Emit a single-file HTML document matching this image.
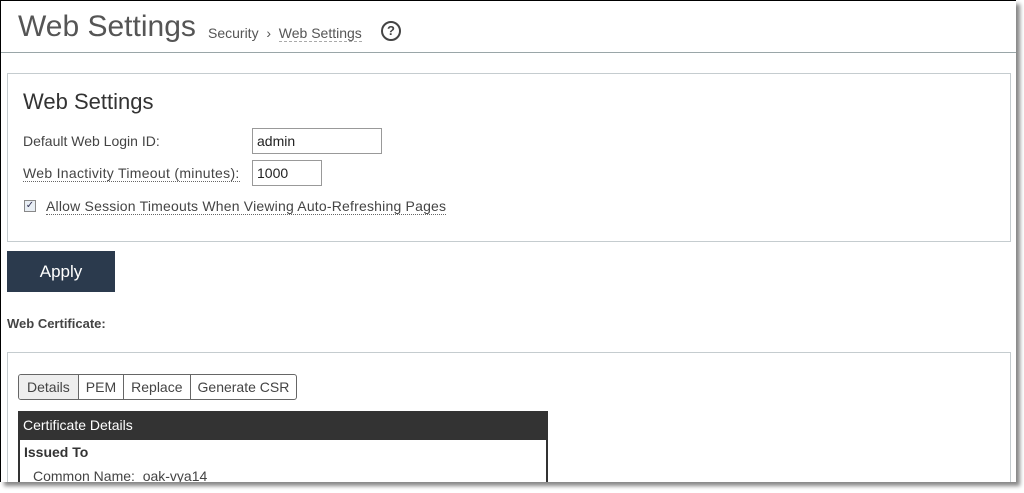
<!DOCTYPE html>
<html><head><style>
*{margin:0;padding:0;box-sizing:border-box}
body{width:1024px;height:493px;background:#fff;font-family:"Liberation Sans",sans-serif;color:#444;position:relative;overflow:hidden}
.page{position:absolute;left:0;top:0;width:1016px;height:482px;background:#fff;border-top:1px solid #000;border-left:1px solid #000;box-shadow:4px 4px 4px #888;overflow:hidden}
.a{position:absolute}
.box{position:absolute;border:1px solid #c5cccf;background:#fff}
.dot{border-bottom:1px dotted #666}
</style></head><body>
<div class="page">
<div class="a" style="left:17px;top:9px;font-size:30px;color:#555">Web Settings</div>
<div class="a" style="left:207px;top:24px;font-size:14px;color:#555">Security &nbsp;›&nbsp; <span style="border-bottom:1px dashed #aaa">Web Settings</span></div>
<div class="a" style="left:380px;top:20px;width:20px;height:20px;border:2px solid #444;border-radius:50%;font-size:13px;font-weight:bold;text-align:center;line-height:16px;color:#444">?</div>
<div class="a" style="left:0;top:51px;width:1016px;height:1px;background:#9aa6a8"></div>
<div class="box" style="left:6px;top:72px;width:1004px;height:169px"></div>
<div class="a" style="left:22px;top:88px;font-size:22px;color:#333">Web Settings</div>
<div class="a" style="left:22px;top:132px;font-size:14px">Default Web Login ID:</div>
<div class="a" style="left:251px;top:127px;width:130px;height:26px;border:1px solid #999;font-size:14px;padding:4px 4px;color:#222">admin</div>
<div class="a dot" style="left:22px;top:164px;font-size:14px;letter-spacing:0.3px">Web Inactivity Timeout (minutes):</div>
<div class="a" style="left:251px;top:159px;width:70px;height:26px;border:1px solid #999;font-size:14px;padding:4px 4px;color:#222">1000</div>
<div class="a" style="left:23px;top:199px;width:12px;height:12px;border:1px solid #888;background:#e8eef4;font-size:10px;line-height:10px;text-align:center;color:#335">✓</div>
<div class="a dot" style="left:45px;top:197px;font-size:14px;letter-spacing:0.2px">Allow Session Timeouts When Viewing Auto-Refreshing Pages</div>
<div class="a" style="left:6px;top:250px;width:108px;height:41px;background:#2b3a4d;color:#fff;font-size:17px;text-align:center;line-height:41px">Apply</div>
<div class="a" style="left:6px;top:315px;font-size:13px;font-weight:bold;color:#444">Web Certificate:</div>
<div class="box" style="left:6px;top:351px;width:1004px;height:160px"></div>
<div class="a" style="left:17px;top:373px;height:26px;border:1px solid #666;border-radius:3px;display:flex;font-size:14px;overflow:hidden">
<div style="padding:4px 8px;background:#eee;border-right:1px solid #666">Details</div>
<div style="padding:4px 7px;border-right:1px solid #666">PEM</div>
<div style="padding:4px 7px;border-right:1px solid #666">Replace</div>
<div style="padding:4px 7px">Generate CSR</div></div>
<div class="a" style="left:17px;top:410px;width:530px;height:100px;border:2px solid #333;border-top:none"></div>
<div class="a" style="left:17px;top:410px;width:530px;height:29px;background:#333;color:#fff;font-size:14px;padding:6px 5px">Certificate Details</div>
<div class="a" style="left:23px;top:443px;font-size:14px;font-weight:bold;color:#333">Issued To</div>
<div class="a" style="left:32px;top:467px;font-size:14px;color:#444">Common Name:&nbsp; oak-vya14</div>
</div>
</body></html>
